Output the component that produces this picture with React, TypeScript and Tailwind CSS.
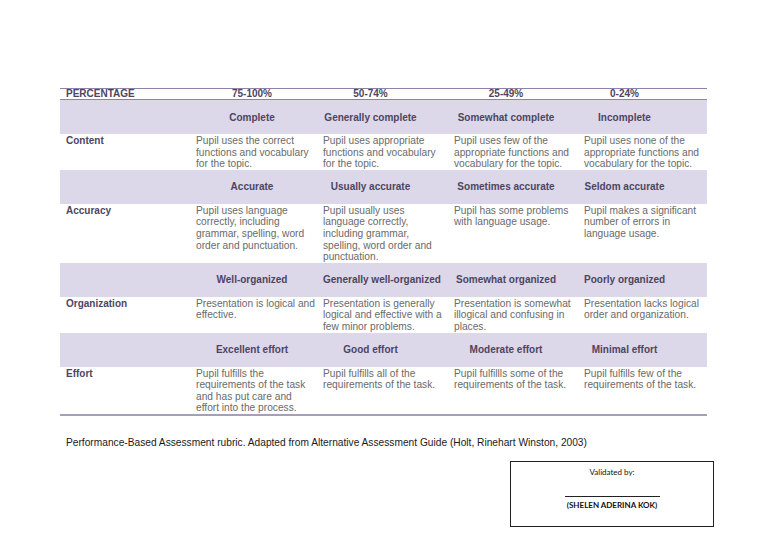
const cols = ["75-100%", "50-74%", "25-49%", "0-24%"];

const rows = [
  {
    label: "Content",
    levels: ["Complete", "Generally complete", "Somewhat complete", "Incomplete"],
    desc: [
      "Pupil uses the correct functions and vocabulary for the topic.",
      "Pupil uses appropriate functions and vocabulary for the topic.",
      "Pupil uses few of the appropriate functions and vocabulary for the topic.",
      "Pupil uses none of the appropriate functions and vocabulary for the topic.",
    ],
  },
  {
    label: "Accuracy",
    levels: ["Accurate", "Usually accurate", "Sometimes accurate", "Seldom accurate"],
    desc: [
      "Pupil uses language correctly, including grammar, spelling, word order and punctuation.",
      "Pupil usually uses language correctly, including grammar, spelling, word order and punctuation.",
      "Pupil has some problems with language usage.",
      "Pupil makes a significant number of errors in language usage.",
    ],
  },
  {
    label: "Organization",
    levels: ["Well-organized", "Generally well-organized", "Somewhat organized", "Poorly organized"],
    desc: [
      "Presentation is logical and effective.",
      "Presentation is generally logical and effective with a few minor problems.",
      "Presentation is somewhat illogical and confusing in places.",
      "Presentation lacks logical order and organization.",
    ],
  },
  {
    label: "Effort",
    levels: ["Excellent effort", "Good effort", "Moderate effort", "Minimal effort"],
    desc: [
      "Pupil fulfills the requirements of the task and has put care and effort into the process.",
      "Pupil fulfills all of the requirements of the task.",
      "Pupil fulfillls some of the requirements of the task.",
      "Pupil fulfills few of the requirements of the task.",
    ],
  },
];

// header centring per column, matches the doc's odd offsets
const headPad = ["pl-[7px] pr-[10px]", "pl-[5px] pr-[30px]", "pl-[6px] pr-[20px]", "pl-[6px] pr-[42px]"];
const descPad = ["pl-[7px] pr-[3px]", "pl-[5px]", "pl-[6px]", "pl-[6px]"];
const grid = "grid grid-cols-[129px_129px_130px_130px_129px]";

export default function App() {
  return (
    <div className="w-[768px] h-[543px] bg-white relative overflow-hidden font-['Liberation_Sans',Arial,sans-serif]">
      <div className="pt-[88px] pl-[60px]">
        <div className="w-[647px]">
          <div className={`${grid} border-t border-b border-[#8e82a8] h-[12px] items-center text-[10px] leading-[10px] font-bold text-[#4d4560]`}>
            <div className="pl-[6px]">PERCENTAGE</div>
            {cols.map((c, i) => (
              <div key={i} className={`text-center ${headPad[i]}`}>{c}</div>
            ))}
          </div>
          {rows.map((r, ri) => (
            <div key={ri}>
              <div className={`${grid} h-[34px] bg-[#dcd7e9] items-center text-[10px] font-bold text-[#4d4560]`}>
                <div />
                {r.levels.map((l, i) => (
                  <div key={i} className={`text-center whitespace-nowrap ${headPad[i]}`}>{l}</div>
                ))}
              </div>
              <div className={`${grid} pt-[1px] text-[10.2px] leading-[11.6px] text-[#6a6a6a]`}>
                <div className="pl-[6px] text-[10px] font-bold text-[#4d4560]">{r.label}</div>
                {r.desc.map((d, i) => (
                  <div key={i} className={descPad[i]}>{d}</div>
                ))}
              </div>
            </div>
          ))}
          <div className="h-[2px] bg-[#a79ebb]" />
        </div>
        <div className="mt-[21px] pl-[6px] text-[10.2px] leading-[12px] text-[#1a1a1a]">
          Performance-Based Assessment rubric. Adapted from Alternative Assessment Guide (Holt, Rinehart Winston, 2003)
        </div>
      </div>
      <div className="absolute left-[510px] top-[461px] w-[204px] h-[66px] border border-[#222] flex flex-col items-center font-['Lato',sans-serif] text-[8px] text-[#111]">
        <div className="mt-[4px]">Validated by:</div>
        <div className="mt-[18px] w-[95px] border-b border-[#222]" />
        <div className="mt-[2px] font-bold">(SHELEN ADERINA KOK)</div>
      </div>
    </div>
  );
}
